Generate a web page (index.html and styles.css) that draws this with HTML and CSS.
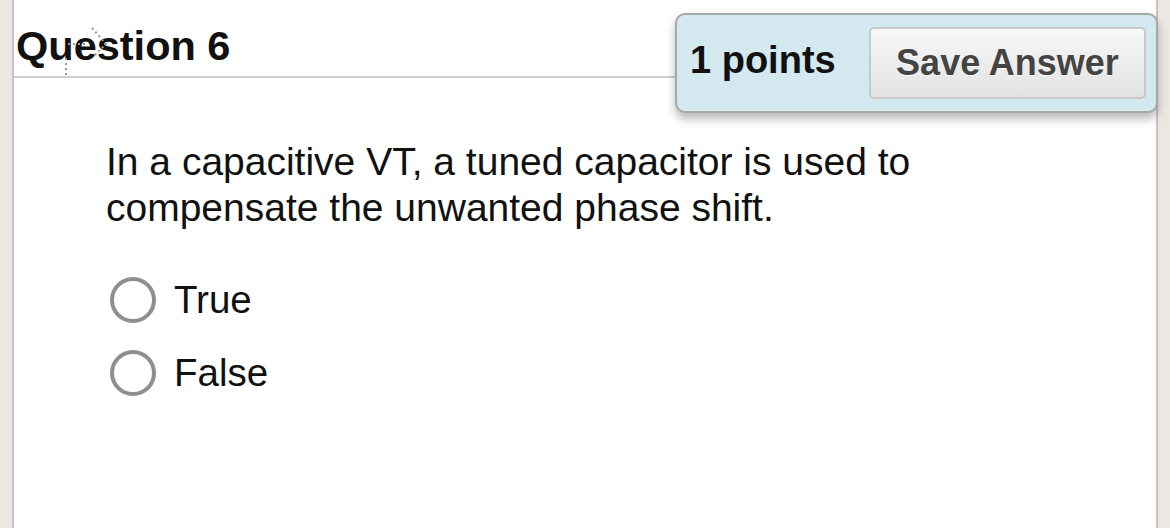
FILE: index.html
```html
<!DOCTYPE html>
<html lang="en">
<head>
  <meta charset="UTF-8">
  <title>Question 6</title>
  <link rel="stylesheet" href="styles.css">
</head>
<body>
  <div class="page">
    <div class="question">
      <div class="question-header">
        <h2>Question 6</h2>
        <svg class="cursor-trace" width="60" height="60" viewBox="0 0 60 60">
          <path d="M14 24 L34 24 M38 8 L52 24 L40 36 M12 38 L12 58" fill="none" stroke="#999" stroke-width="2" stroke-dasharray="2 3"/>
        </svg>
        <div class="points-box">
          <span class="points">1 points</span>
          <button type="button" class="save-button">Save Answer</button>
        </div>
      </div>

      <div class="question-body">
        <p class="question-text">In a capacitive VT, a tuned capacitor is used to compensate the unwanted phase shift.</p>

        <ul class="choices">
          <li>
            <label class="choice">
              <input type="radio" name="q6" value="true">
              <span class="radio"></span>
              True
            </label>
          </li>
          <li>
            <label class="choice">
              <input type="radio" name="q6" value="false">
              <span class="radio"></span>
              False
            </label>
          </li>
        </ul>
      </div>
    </div>
  </div>
</body>
</html>
```

FILE: styles.css
```css
* {
  margin: 0;
  padding: 0;
  box-sizing: border-box;
}

body {
  font-family: 'Liberation Sans', Arial, sans-serif;
  background-color: #ebe8e2;
  color: #111;
  height: 100vh;
  overflow: hidden;
}

.page {
  padding: 0 12px;
  height: 100%;
}

.question {
  background-color: #ffffff;
  border-left: 2px solid #c4c4c4;
  border-right: 2px solid #c4c4c4;
  height: 100%;
}

.question-header {
  position: relative;
  height: 78px;
  border-bottom: 2px solid #cfcfcf;
  padding: 22px 0 0 2px;
}

h2 {
  font-size: 41.5px;
  font-weight: 700;
  line-height: 48px;
  color: #111;
}

.cursor-trace {
  position: absolute;
  left: 40px;
  top: 20px;
}

/* Floating points / save box */
.points-box {
  position: absolute;
  top: 13px;
  right: -2px;
  width: 483px;
  height: 100px;
  background-color: #d3e9ef;
  border: 2px solid #a8a8a8;
  border-radius: 10px;
  box-shadow: 0 6px 10px rgba(0, 0, 0, 0.28);
  display: flex;
  align-items: center;
  justify-content: space-between;
  padding: 0 10px 0 13px;
}

.points {
  font-size: 38px;
  font-weight: 700;
  color: #111;
  margin-top: -6px;
}

.save-button {
  width: 277px;
  height: 72px;
  font-family: inherit;
  font-size: 36px;
  font-weight: 700;
  color: #444;
  background: linear-gradient(#f8f8f8, #e2e2e2);
  border: 2px solid #c9c9c9;
  border-radius: 5px;
  text-shadow: 0 1px 0 #fff;
  margin-top: -1px;
}

.question-body {
  padding: 61px 0 0 92px;
}

.question-text {
  font-size: 39px;
  line-height: 46px;
  width: 900px;
}

.choices {
  list-style: none;
  margin-top: 46px;
  display: flex;
  flex-direction: column;
  gap: 27px;
}

.choice {
  display: flex;
  align-items: center;
  gap: 18px;
  font-size: 38.5px;
  line-height: 46px;
}

.choice input {
  display: none;
}

.radio {
  width: 46px;
  height: 46px;
  border: 4px solid #8e8e93;
  border-radius: 50%;
  margin-left: 4px;
}
```
